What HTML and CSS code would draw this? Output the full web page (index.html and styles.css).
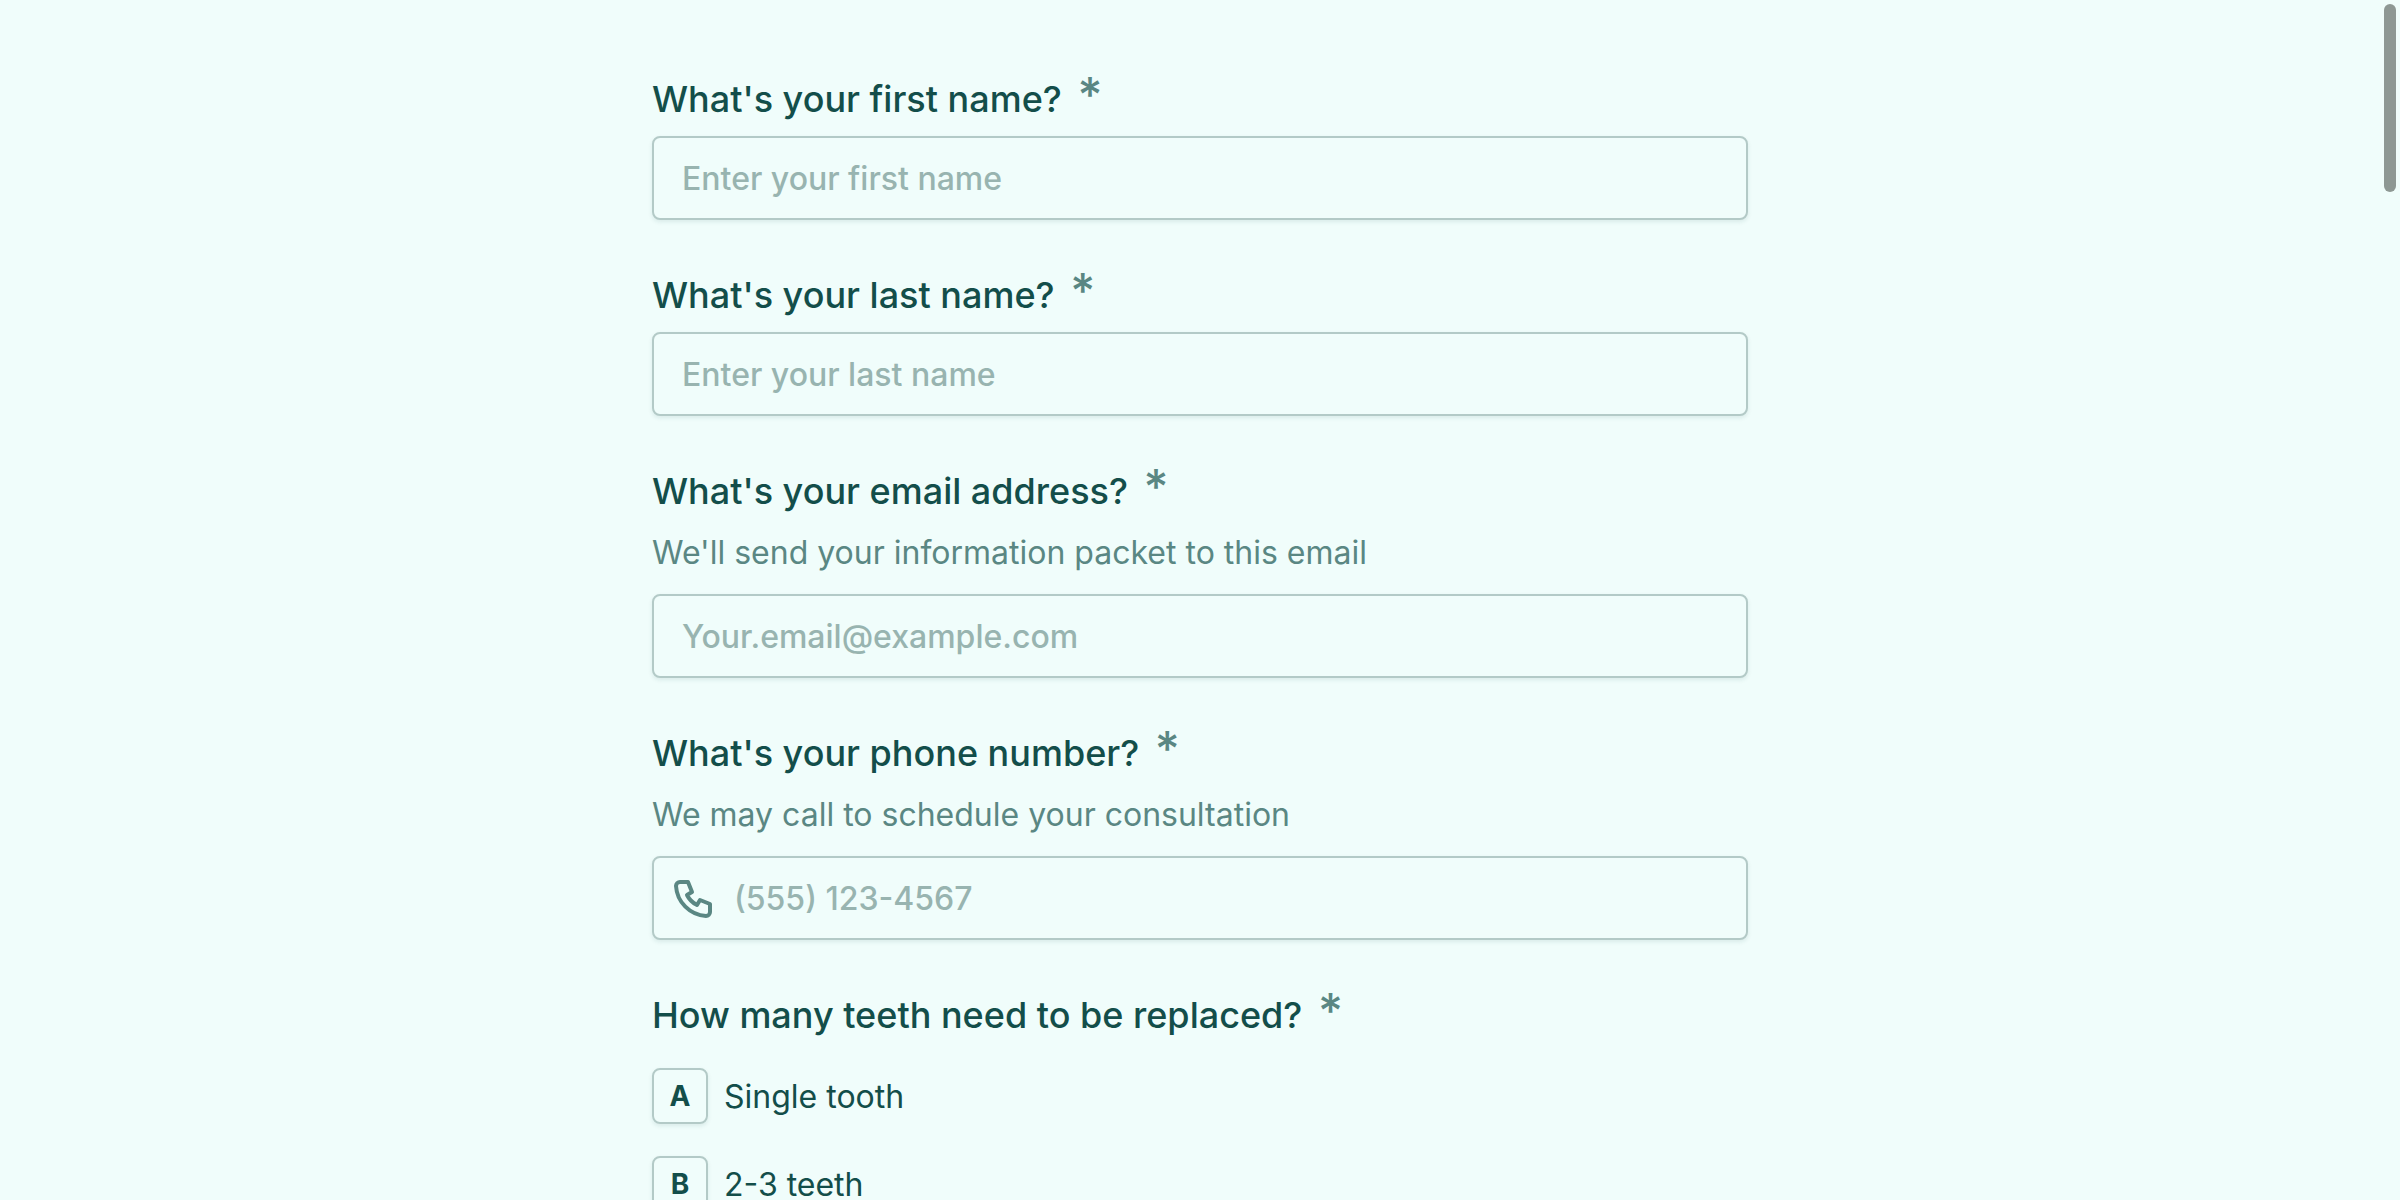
FILE: index.html
```html
<!DOCTYPE html>
<html lang="en">

<head>
	<meta charset="utf-8">
	<meta name="viewport" content="width=device-width, initial-scale=1">
	<title>Dental implant consultation</title>
	<link rel="stylesheet" href="styles.css">
</head>

<body>
	<form class="form">
		<div class="field">
			<label class="title" for="firstName">What's your first name? <span class="required">*</span></label>
			<input class="input" type="text" id="firstName" placeholder="Enter your first name" required>
		</div>

		<div class="field">
			<label class="title" for="lastName">What's your last name? <span class="required">*</span></label>
			<input class="input" type="text" id="lastName" placeholder="Enter your last name" required>
		</div>

		<div class="field">
			<label class="title" for="email">What's your email address? <span class="required">*</span></label>
			<p class="hint" id="emailHint">We'll send your information packet to this email</p>
			<input class="input" type="email" id="email" placeholder="Your.email@example.com" aria-describedby="emailHint" required>
		</div>

		<div class="field">
			<label class="title" for="phone">What's your phone number? <span class="required">*</span></label>
			<p class="hint" id="phoneHint">We may call to schedule your consultation</p>
			<div class="input phone-box">
				<svg class="phone-icon" viewBox="0 0 24 24" aria-hidden="true">
					<path d="M5 4h4l2 5l-2.5 1.5a11 11 0 0 0 5 5l1.5 -2.5l5 2v4a2 2 0 0 1 -2 2a16 16 0 0 1 -15 -15a2 2 0 0 1 2 -2" />
				</svg>
				<input class="phone-input" type="tel" id="phone" placeholder="(555) 123-4567" aria-describedby="phoneHint" required>
			</div>
		</div>

		<fieldset class="field choices">
			<legend class="title">How many teeth need to be replaced? <span class="required">*</span></legend>
			<label class="choice">
				<input type="radio" name="teeth" value="single">
				<span class="key">A</span>
				<span>Single tooth</span>
			</label>
			<label class="choice">
				<input type="radio" name="teeth" value="2-3">
				<span class="key">B</span>
				<span>2-3 teeth</span>
			</label>
		</fieldset>
	</form>

	<div class="scroll-thumb"></div>
</body>

</html>
```

FILE: styles.css
```css
* {
	box-sizing: border-box;
}

html,
body {
	height: 100%;
	margin: 0;
	overflow: hidden;
}

body {
	background-color: #f0fdfb;
	color: #134e4a;
	font-family: Inter, "Liberation Sans", sans-serif;
	font-size: 32px;
	line-height: 49px;
}

.form {
	max-width: 1096px;
	margin: 0 auto;
	padding-top: 72px;
}

.field {
	margin: 0 0 48px;
	padding: 0;
	border: none;
}

.title {
	display: block;
	height: 54px;
	margin-bottom: 10px;
	padding: 0;
	font-size: 36px;
	font-weight: 500;
	line-height: 54px;
}

.required {
	margin-left: 6px;
	color: #5a8783;
	font-size: 48px;
	line-height: 0;
}

.hint {
	margin: 0 0 17px;
	color: #5a8783;
}

.input {
	display: block;
	width: 100%;
	height: 84px;
	padding: 0 28px;
	border: 2px solid #b3cac7;
	border-radius: 8px;
	background-color: #f0fdfb;
	box-shadow: 0 2px 4px rgba(19, 78, 74, 0.1);
	color: #134e4a;
	font: inherit;
	font-weight: 500;
	outline: none;
}

.input::placeholder,
.phone-input::placeholder {
	color: #98b4b0;
	opacity: 1;
}

.phone-box {
	display: flex;
	align-items: center;
	gap: 16px;
	padding: 0 16px;
}

.phone-icon {
	flex: none;
	width: 48px;
	height: 48px;
	fill: none;
	stroke: #5a8783;
	stroke-width: 2;
	stroke-linecap: round;
	stroke-linejoin: round;
}

.phone-input {
	flex: 1;
	align-self: stretch;
	min-width: 0;
	padding: 0;
	border: none;
	background: none;
	color: inherit;
	font: inherit;
	outline: none;
}

.choices .title {
	margin-bottom: 26px;
}

.choice {
	position: relative;
	display: flex;
	align-items: center;
	gap: 16px;
	margin-bottom: 32px;
	cursor: pointer;
}

/* the lettered key stands in for the radio */
.choice input {
	position: absolute;
	opacity: 0;
}

.key {
	display: flex;
	align-items: center;
	justify-content: center;
	width: 56px;
	height: 56px;
	border: 2px solid #b3cac7;
	border-radius: 8px;
	box-shadow: 0 2px 4px rgba(19, 78, 74, 0.1);
	font-size: 28px;
	font-weight: 700;
}

.choice input:checked + .key {
	background-color: #134e4a;
	color: #f0fdfb;
}

.scroll-thumb {
	position: fixed;
	top: 4px;
	right: 4px;
	width: 12px;
	height: 188px;
	border-radius: 6px;
	background-color: #8e9894;
}
```
